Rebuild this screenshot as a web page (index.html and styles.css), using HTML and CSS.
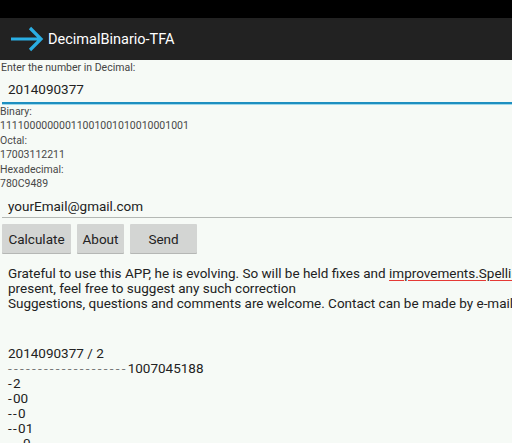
FILE: index.html
```html
<!DOCTYPE html>
<html lang="en">
<head>
    <meta charset="UTF-8">
    <meta name="viewport" content="width=device-width, initial-scale=1.0">
    <title>DecimalBinario-TFA</title>
    <link rel="stylesheet" href="styles.css">
</head>
<body>
    <div class="status-bar"></div>
    <div class="action-bar">
        <svg class="app-icon" width="34" height="28" viewBox="0 0 34 28">
            <path d="M1 14 H31 M20 3 L31 14 L20 25" fill="none" stroke="#2aaee3" stroke-width="3.2"/>
        </svg>
        <span class="app-title">DecimalBinario-TFA</span>
    </div>

    <div class="content">
        <div class="label">Enter the number in Decimal:</div>
        <div class="field field-focused">2014090377</div>

        <div class="results">
            <div>Binary:</div>
            <div>11110000000011001001010010001001</div>
            <div>Octal:</div>
            <div>17003112211</div>
            <div>Hexadecimal:</div>
            <div>780C9489</div>
        </div>

        <div class="field field-email">yourEmail@gmail.com</div>

        <div class="buttons">
            <button class="btn btn-calc">Calculate</button>
            <button class="btn btn-about">About</button>
            <button class="btn btn-send">Send</button>
        </div>

        <div class="note">
            <div>Grateful to use this APP, he is evolving. So will be held fixes and <span class="misspelled">improvements.Spelling</span> errors may be</div>
            <div>present, feel free to suggest any such correction</div>
            <div>Suggestions, questions and comments are welcome. Contact can be made by e-mail</div>
        </div>

        <div class="steps">
            <div>2014090377 / 2</div>
            <div><span class="dash dash-line">--------------------</span>1007045188</div>
            <div><span class="dash">-</span>2</div>
            <div><span class="dash">-</span>00</div>
            <div><span class="dash">--</span>0</div>
            <div><span class="dash">--</span>01</div>
            <div><span class="dash">---</span>0</div>
        </div>
    </div>
</body>
</html>
```

FILE: styles.css
```css
html, body {
    margin: 0;
    padding: 0;
}

body {
    width: 512px;
    height: 443px;
    overflow: hidden;
    background-color: #f6faf6;
    font-family: Roboto, "Liberation Sans", sans-serif;
    color: #222;
}

.status-bar {
    height: 18px;
    background: #000;
}

.action-bar {
    height: 42px;
    background: #222;
    display: flex;
    align-items: center;
    padding-left: 10px;
    box-sizing: border-box;
}

.app-icon {
    margin-right: 4px;
}

.app-title {
    color: #fff;
    font-size: 14.5px;
}

.content {
    padding-top: 1px;
}

.label {
    font-size: 10.5px;
    color: #444;
    line-height: 14px;
    padding-left: 1px;
}

.field {
    margin: 0 0 0 2px;
    padding-left: 6px;
    font-size: 13.5px;
    color: #222;
    position: relative;
}

.field-focused {
    height: 27px;
    line-height: 29px;
    border-bottom: 2px solid #1e8fc0;
}

.field-focused::after {
    content: "";
    position: absolute;
    left: 0;
    right: 0;
    bottom: -3px;
    height: 1px;
    background: #9fd8ea;
}

.field-email {
    height: 23px;
    line-height: 24px;
    border-bottom: 1px solid #b4b8b4;
}

.results {
    font-size: 10.5px;
    line-height: 14.4px;
    color: #484848;
    margin-top: 1px;
    height: 89px;
}

.buttons {
    display: flex;
    gap: 6px;
    padding-left: 2px;
    margin-top: 6px;
}

.btn {
    height: 29px;
    border: none;
    border-radius: 1px;
    background: #d3d5d3;
    box-shadow: 0 1px 0 #b5b7b5;
    font-family: Roboto, "Liberation Sans", sans-serif;
    font-size: 13.5px;
    color: #222;
    padding: 0;
}

.btn-calc { width: 69px; }
.btn-about { width: 47px; }
.btn-send { width: 67px; }

.note {
    margin-top: 13px;
    padding-left: 8px;
    font-size: 13.5px;
    line-height: 15px;
    white-space: nowrap;
}

.misspelled {
    text-decoration: underline;
    text-decoration-color: #e53935;
    text-underline-offset: 2px;
}

.steps {
    margin-top: 35px;
    padding-left: 8px;
    font-size: 13.5px;
    line-height: 15px;
}

.dash {
    letter-spacing: 1.3px;
}

.dash-line {
    color: #777;
    letter-spacing: 2.25px;
}
```
